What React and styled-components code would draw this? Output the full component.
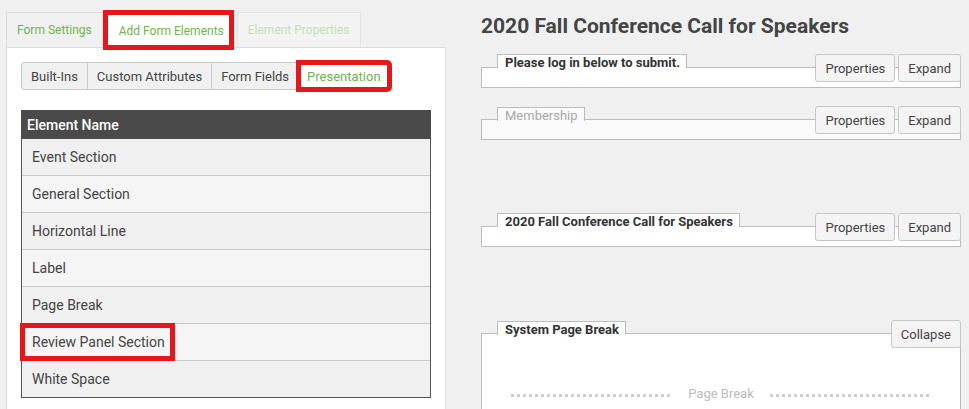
import React from "react";
import styled, { createGlobalStyle, css } from "styled-components";

const GREEN = "#6db64c";
const RED = "#e4181b";

const GlobalStyle = createGlobalStyle`
  html, body {
    margin: 0;
    padding: 0;
    overflow: hidden;
  }
  body {
    background: #f0f0f0;
    font-family: Roboto, "Liberation Sans", Arial, sans-serif;
    color: #444;
  }
  * {
    box-sizing: border-box;
  }
`;

// red annotation boxes drawn over the screenshot
const marked = css`
  position: relative;
  z-index: 2;
  outline: 5px solid ${RED};
  outline-offset: -3px;
`;

const Page = styled.div`
  display: flex;
  align-items: flex-start;
  gap: 35px;
  padding: 12px 8px 0 6px;
  height: 409px;
`;

const LeftCol = styled.div`
  width: 440px;
  flex: none;
  display: flex;
  flex-direction: column;
`;

const TabBar = styled.div`
  display: flex;
  align-items: flex-start;
  margin-bottom: -1px;
`;

const Tab = styled.div`
  height: 35px;
  padding: 0 10px;
  margin-right: 2px;
  display: flex;
  align-items: center;
  font-size: 12px;
  color: ${GREEN};
  background: #f0f0f0;
  border: 1px solid #dcdcdc;
  border-bottom: none;

  ${(p) =>
    p.$active &&
    css`
      height: 36px;
      padding: 0 7px 0 13px;
      margin-right: 5px;
      background: #fff;
      position: relative;
      z-index: 1;
    `}
  ${(p) =>
    p.$disabled &&
    css`
      background: #f3f3f3;
      color: #c3dfb5;
      border-color: #e3e3e3;
    `}
  ${(p) => p.$marked && marked}
`;

const PanelBody = styled.div`
  background: #fff;
  border: 1px solid #dcdcdc;
  padding: 14px 14px 0;
  height: 380px;
`;

const SubTabs = styled.div`
  display: inline-flex;
`;

const SubTab = styled.div`
  height: 28px;
  padding: 0 9px;
  display: flex;
  align-items: center;
  font-size: 13px;
  color: #444;
  background: #f0f0f0;
  border: 1px solid #c9c9c9;
  margin-left: -1px;

  &:first-child {
    margin-left: 0;
    border-radius: 3px 0 0 3px;
  }
  &:last-child {
    border-radius: 0 3px 3px 0;
  }

  ${(p) =>
    p.$active &&
    css`
      background: #fff;
      color: ${GREEN};
      padding: 0 8px;
    `}
  ${(p) => p.$marked && marked}
`;

const Table = styled.div`
  margin-top: 20px;
  width: 410px;
  border: 1px solid #555;
  border-top: none;
`;

const HeadCell = styled.div`
  height: 29px;
  margin: 0 -1px;
  padding-left: 6px;
  display: flex;
  align-items: center;
  background: #4a4a4a;
  color: #fff;
  font-size: 14px;
  font-weight: 500;
`;

const Row = styled.div`
  height: 37px;
  padding-left: 10px;
  display: flex;
  align-items: center;
  font-size: 14px;
  color: #444;
  background: ${(p) => (p.$odd ? "#f0f0f0" : "#f5f5f5")};
  border-bottom: 1px solid #c9c9c9;

  &:last-child {
    height: 36px;
    border-bottom: none;
  }
`;

const RowLabel = styled.span`
  display: inline-flex;
  align-items: center;
  ${(p) =>
    p.$marked &&
    css`
      height: 34px;
      margin-left: -10px;
      padding: 0 8px 0 10px;
      ${marked}
    `}
`;

const RightCol = styled.div`
  width: 480px;
  display: flex;
  flex-direction: column;
`;

const Title = styled.h1`
  margin: 0;
  font-size: 21px;
  line-height: 28px;
  font-weight: 700;
  color: #444;
`;

const Section = styled.div`
  margin-top: ${(p) => p.$gap}px;
  display: flex;
  flex-direction: column;
`;

const SectionHead = styled.div`
  display: flex;
  align-items: flex-start;
  padding-left: 16px;
  margin-bottom: -15px;
  position: relative;
  z-index: 1;
`;

const Legend = styled.div`
  height: 14px;
  padding: 0 6px 0 7px;
  margin-top: ${(p) => (p.$low ? 1 : 0)}px;
  font-size: 13px;
  line-height: 15px;
  font-weight: ${(p) => (p.$muted ? 400 : 700)};
  color: ${(p) => (p.$muted ? "#a9a9a9" : "#333")};
  background: ${(p) => (p.$muted ? "#fafafa" : "#fff")};
  border: 1px solid #bdbdbd;
  border-bottom: none;
`;

const Actions = styled.div`
  margin-left: auto;
  display: flex;
  gap: 3px;
`;

const Button = styled.button`
  height: 28px;
  padding: 0 9px;
  font-family: inherit;
  font-size: 13px;
  color: #444;
  background: #f4f4f4;
  border: 1px solid #c6c6c6;
  border-radius: 3px;
`;

const Box = styled.div`
  height: ${(p) => p.$h}px;
  background: ${(p) => (p.$muted ? "#fafafa" : "#fff")};
  border: 1px solid #bdbdbd;
`;

const BreakLine = styled.div`
  display: flex;
  align-items: center;
  gap: 16px;
  padding: 52px 29px 0;
  font-size: 13px;
  color: #bcbcbc;
`;

const Dots = styled.div`
  flex: 1;
  height: 3px;
  margin-top: 3px;
  background: repeating-linear-gradient(
    to right,
    #cfcfcf 0 3px,
    transparent 3px 6px
  );
`;

const elements = [
  "Event Section",
  "General Section",
  "Horizontal Line",
  "Label",
  "Page Break",
  "Review Panel Section",
  "White Space",
];

const App = () => {
  return (
    <>
      <GlobalStyle />
      <Page>
        <LeftCol>
          <TabBar>
            <Tab>Form Settings</Tab>
            <Tab $active $marked>
              Add Form Elements
            </Tab>
            <Tab $disabled>Element Properties</Tab>
          </TabBar>
          <PanelBody>
            <SubTabs>
              <SubTab>Built-Ins</SubTab>
              <SubTab>Custom Attributes</SubTab>
              <SubTab>Form Fields</SubTab>
              <SubTab $active $marked>
                Presentation
              </SubTab>
            </SubTabs>
            <Table>
              <HeadCell>Element Name</HeadCell>
              {elements.map((name, i) => (
                <Row key={name} $odd={i % 2 === 0}>
                  <RowLabel $marked={name === "Review Panel Section"}>
                    {name}
                  </RowLabel>
                </Row>
              ))}
            </Table>
          </PanelBody>
        </LeftCol>

        <RightCol>
          <Title>2020 Fall Conference Call for Speakers</Title>

          <Section $gap={14}>
            <SectionHead>
              <Legend>Please log in below to submit.</Legend>
              <Actions>
                <Button>Properties</Button>
                <Button>Expand</Button>
              </Actions>
            </SectionHead>
            <Box $h={21} />
          </Section>

          <Section $gap={18}>
            <SectionHead>
              <Legend $muted $low>
                Membership
              </Legend>
              <Actions>
                <Button>Properties</Button>
                <Button>Expand</Button>
              </Actions>
            </SectionHead>
            <Box $h={21} $muted />
          </Section>

          <Section $gap={73}>
            <SectionHead>
              <Legend>2020 Fall Conference Call for Speakers</Legend>
              <Actions>
                <Button>Properties</Button>
                <Button>Expand</Button>
              </Actions>
            </SectionHead>
            <Box $h={21} />
          </Section>

          <Section $gap={73}>
            <SectionHead>
              <Legend $low>System Page Break</Legend>
              <Actions>
                <Button>Collapse</Button>
              </Actions>
            </SectionHead>
            <Box $h={120}>
              <BreakLine>
                <Dots />
                <span>Page Break</span>
                <Dots />
              </BreakLine>
            </Box>
          </Section>
        </RightCol>
      </Page>
    </>
  );
};

export default App;
